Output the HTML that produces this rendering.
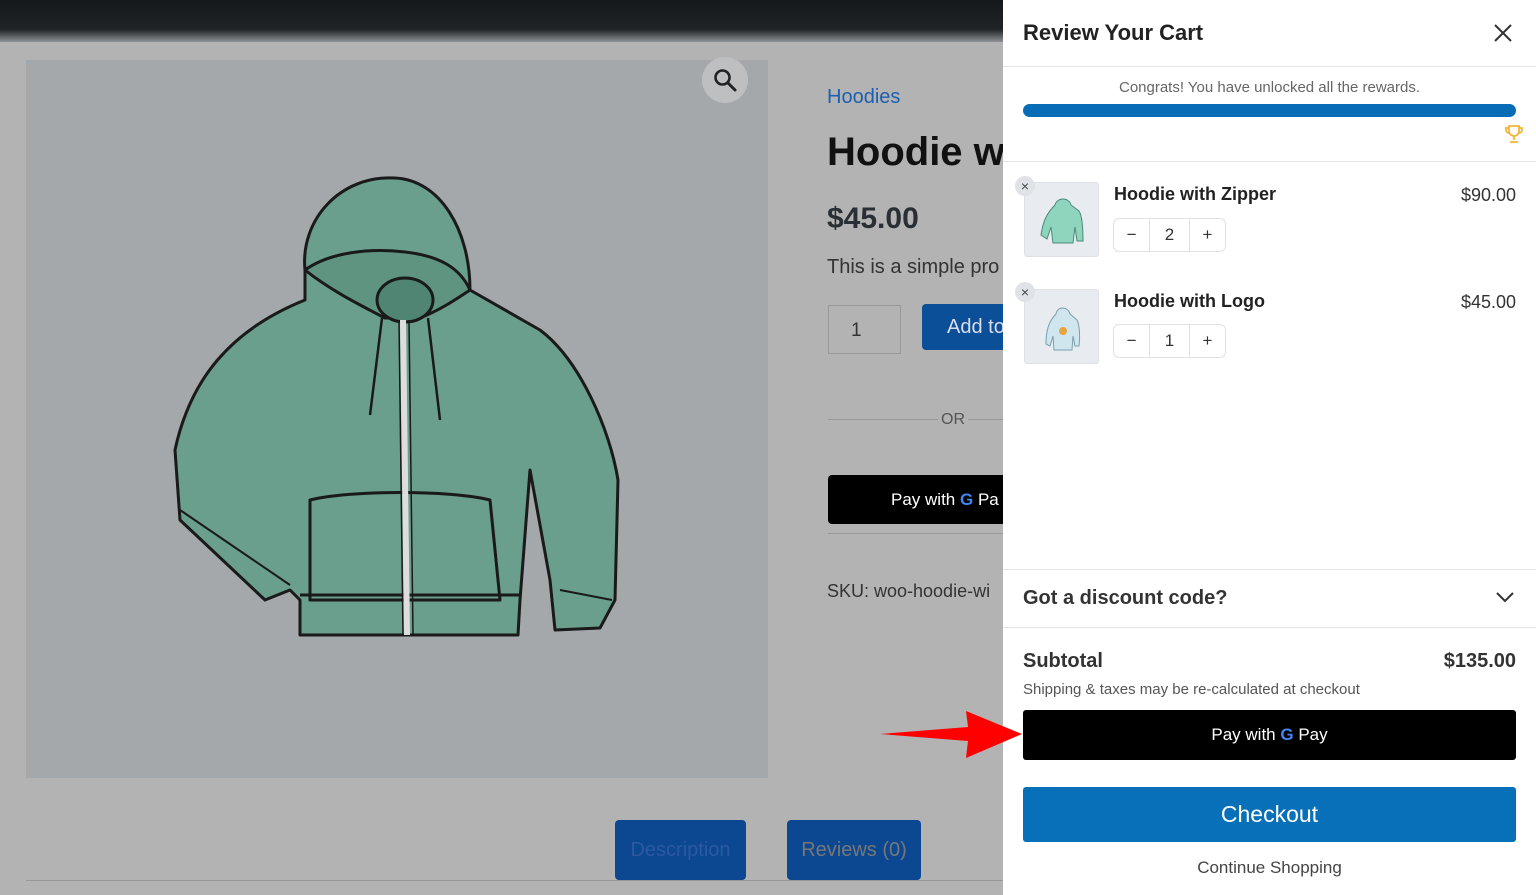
<!DOCTYPE html>
<html><head><meta charset="utf-8"><style>
*{box-sizing:border-box;margin:0;padding:0}
body{width:1536px;height:895px;overflow:hidden;background:#b3b3b3;font-family:"Liberation Sans",sans-serif;position:relative}
.abs{position:absolute}
.topbar{left:0;top:0;width:1003px;height:42px;background:linear-gradient(#14181b,#202426 70%,#8e9295)}
.img{left:26px;top:60px;width:742px;height:718px;background:#a4a8ab}
.panel{left:1003px;top:0;width:533px;height:895px;background:#fff;color:#222}
.qty{position:absolute;width:113px;height:34px;border:1px solid #e2e2e2;border-radius:6px;display:flex;font-size:17px;color:#333}
.qty div{flex:1;display:flex;align-items:center;justify-content:center}
.qty div:nth-child(2){border-left:1px solid #e2e2e2;border-right:1px solid #e2e2e2;flex:1.1}
.thumb{position:absolute;left:21px;width:75px;height:75px;background:#e8ebef;border:1px solid #dde1e6;border-radius:3px}
.rm{position:absolute;left:12px;width:20px;height:20px;border-radius:50%;background:#dfe2e6;font-size:14px;color:#444;text-align:center;line-height:20px}
.hr{position:absolute;left:0;width:533px;height:1px;background:#e6e6e6}
</style></head><body>
<div class="abs topbar"></div>
<div class="abs img"></div>
<div class="abs" style="left:702px;top:57px;width:46px;height:46px;border-radius:50%;background:#bdbfc1"></div>
<svg class="abs" style="left:712px;top:67px" width="26" height="26" viewBox="0 0 26 26"><circle cx="10.5" cy="10.5" r="7" fill="none" stroke="#222" stroke-width="2.6"/><path d="M16 16l7 7" stroke="#222" stroke-width="3" stroke-linecap="round"/></svg>
<svg class="abs" style="left:0;top:0" width="768" height="700" viewBox="0 0 768 700">
<g stroke="#1a1a1a" stroke-width="3" stroke-linejoin="round" fill="#6a9e8d">
<path d="M305 270 C300 220 340 175 395 178 C440 180 470 230 470 290 L540 330 C580 360 610 430 618 480 L615 600 L600 628 L555 630 L550 580 L530 470 L520 600 L518 635 L300 635 L300 600 L290 590 L265 600 L180 520 L175 450 C190 380 230 330 305 300 Z"/>
<path d="M305 270 C330 252 370 248 405 252 C440 256 460 268 470 290 C455 300 440 310 420 318 L385 318 C360 305 330 290 305 270Z" fill="#5f9481"/>
<ellipse cx="405" cy="300" rx="28" ry="22" fill="#4f8572"/>
<path d="M310 500 C350 490 450 490 490 500 L500 600 L310 600 Z" fill="none"/>
<path d="M300 595 L520 595" fill="none"/>
<path d="M382 318 L370 415 M428 318 L440 420" fill="none" stroke-width="2.5"/>
<path d="M403 320 L407 635" stroke="#ddd" stroke-width="6"/>
<path d="M399 320 L403 635 M409 320 L413 635" fill="none" stroke-width="1.5"/>
<path d="M180 510 L290 585 M560 590 L612 600" fill="none" stroke-width="2"/>
</g></svg>
<div class="abs" style="left:827px;top:86px;font-size:20px;color:#1d5fb0">Hoodies</div>
<div class="abs" style="left:827px;top:130px;font-size:40px;font-weight:bold;color:#111;white-space:nowrap">Hoodie wi</div>
<div class="abs" style="left:827px;top:202px;font-size:30px;font-weight:bold;color:#2a2f36">$45.00</div>
<div class="abs" style="left:827px;top:256px;font-size:20px;color:#333;white-space:nowrap">This is a simple pro</div>
<div class="abs" style="left:828px;top:305px;width:73px;height:49px;border:1px solid #999;font-size:19px;color:#333;padding:14px 0 0 22px">1</div>
<div class="abs" style="left:922px;top:304px;width:90px;height:46px;background:#0a4f97;border-radius:4px;color:#dde;font-size:20px;padding:12px 0 0 25px;white-space:nowrap">Add to</div>
<div class="abs" style="left:828px;top:419px;width:175px;height:1px;background:#999"></div>
<div class="abs" style="left:938px;top:411px;padding:0 3px;background:#b3b3b3;color:#555;font-size:16px">OR</div>
<div class="abs" style="left:828px;top:475px;width:180px;height:49px;background:#000;border-radius:4px;color:#fff;font-size:17px;padding:15px 0 0 63px;white-space:nowrap">Pay with <b style="color:#4285f4">G</b> Pa</div>
<div class="abs" style="left:828px;top:533px;width:175px;height:1px;background:#999"></div>
<div class="abs" style="left:827px;top:581px;font-size:18px;color:#333;white-space:nowrap">SKU: woo-hoodie-wi</div>
<div class="abs" style="left:615px;top:820px;width:131px;height:60px;background:#0b4891;border-radius:4px;color:#2d58a0;font-size:20px;text-align:center;line-height:60px">Description</div>
<div class="abs" style="left:787px;top:820px;width:134px;height:60px;background:#0b4891;border-radius:4px;color:#777;font-size:20px;text-align:center;line-height:60px">Reviews (0)</div>
<div class="abs" style="left:26px;top:880px;width:977px;height:1px;background:#999"></div>

<div class="abs panel">
<div class="abs" style="left:20px;top:20px;font-size:22px;font-weight:bold">Review Your Cart</div>
<svg class="abs" style="left:489px;top:22px" width="22" height="22" viewBox="0 0 22 22"><path d="M3 3L19 19M19 3L3 19" stroke="#333" stroke-width="2"/></svg>
<div class="hr" style="top:66px"></div>
<div class="abs" style="left:0;width:533px;top:79px;text-align:center;font-size:15px;color:#666">Congrats! You have unlocked all the rewards.</div>
<div class="abs" style="left:20px;top:104px;width:493px;height:13px;background:#086db6;border-radius:7px"></div>
<svg class="abs" style="left:502px;top:124px" width="18" height="20" viewBox="0 0 18 20"><path d="M4 2h10v5a5 5 0 0 1-10 0zM4 4H1v2a3 3 0 0 0 3 3M14 4h3v2a3 3 0 0 1-3 3M9 12v4M5 18h8" fill="none" stroke="#f2b537" stroke-width="1.8"/></svg>
<div class="hr" style="top:161px"></div>
<div class="thumb" style="top:182px"><svg width="75" height="75" viewBox="0 0 75 75"><path d="M30 22 C32 14 44 14 46 22 L54 28 C58 34 58 50 58 58 L52 58 L50 44 L48 60 L28 60 L26 44 L22 56 L16 52 C18 38 22 30 30 22Z" fill="#8fd4bd" stroke="#4b8a78" stroke-width="1"/></svg></div>
<div class="rm" style="top:176px">×</div>
<div class="abs" style="left:111px;top:184px;font-size:18px;font-weight:bold">Hoodie with Zipper</div>
<div class="abs" style="left:513px;transform:translateX(-100%);top:185px;font-size:18px;color:#333">$90.00</div>
<div class="qty" style="left:110px;top:218px"><div>−</div><div>2</div><div>+</div></div>
<div class="thumb" style="top:289px"><svg width="75" height="75" viewBox="0 0 75 75"><path d="M31 24 C32 16 43 16 45 24 L52 30 C55 36 55 48 54 56 L50 56 L48 46 L47 60 L29 60 L28 46 L25 56 L21 54 C21 42 23 32 31 24Z" fill="#cfe6ee" stroke="#7aa0ab" stroke-width="1"/><circle cx="38" cy="41" r="4" fill="#e9a440"/></svg></div>
<div class="rm" style="top:282px">×</div>
<div class="abs" style="left:111px;top:291px;font-size:18px;font-weight:bold">Hoodie with Logo</div>
<div class="abs" style="left:513px;transform:translateX(-100%);top:292px;font-size:18px;color:#333">$45.00</div>
<div class="qty" style="left:110px;top:324px"><div>−</div><div>1</div><div>+</div></div>
<div class="hr" style="top:569px"></div>
<div class="abs" style="left:20px;top:587px;font-size:20px;font-weight:bold;color:#333">Got a discount code?</div>
<svg class="abs" style="left:492px;top:590px" width="20" height="14" viewBox="0 0 20 14"><path d="M2 3l8 8 8-8" fill="none" stroke="#333" stroke-width="2"/></svg>
<div class="hr" style="top:627px"></div>
<div class="abs" style="left:20px;top:650px;font-size:20px;font-weight:bold;color:#333">Subtotal</div>
<div class="abs" style="left:513px;transform:translateX(-100%);top:650px;font-size:20px;font-weight:bold;color:#333">$135.00</div>
<div class="abs" style="left:20px;top:681px;font-size:15px;color:#555">Shipping &amp; taxes may be re-calculated at checkout</div>
<div class="abs" style="left:20px;top:710px;width:493px;height:50px;background:#000;border-radius:3px;color:#fff;font-size:17px;text-align:center;line-height:50px">Pay with <b style="color:#4285f4">G</b> Pay</div>
<div class="abs" style="left:20px;top:787px;width:493px;height:55px;background:#0870b8;border-radius:3px;color:#fff;font-size:23px;text-align:center;line-height:55px">Checkout</div>
<div class="abs" style="left:0;width:533px;top:858px;text-align:center;font-size:17px;color:#444">Continue Shopping</div>
</div>
<svg class="abs" style="left:878px;top:708px;z-index:5" width="145" height="52" viewBox="0 0 145 52"><path d="M2 26 L90 19 L88 3 L144 26 L88 50 L90 33 Z" fill="#f00"/></svg>
</body></html>
